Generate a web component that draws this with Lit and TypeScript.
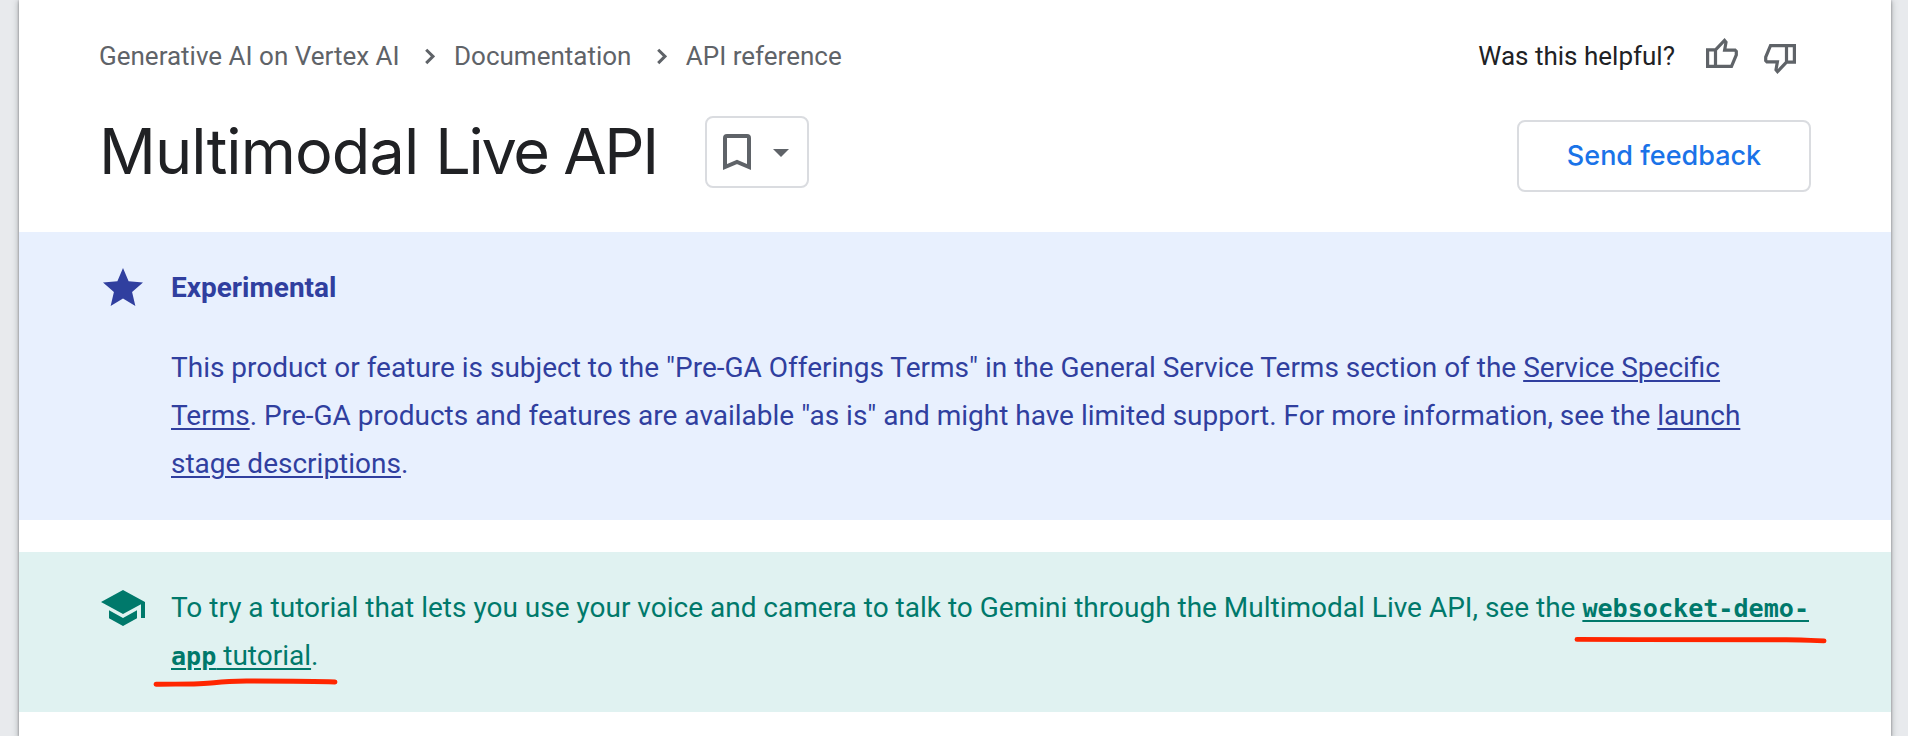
import { LitElement, html, css } from "lit";
import { customElement } from "lit/decorators.js";

const chevron = html`<svg class="chevron" width="10" height="17" viewBox="0 0 10 17"><path d="M1.2 1.7 8 8.4 1.2 15.1" fill="none" stroke="#5f6368" stroke-width="3"/></svg>`;
const thumb = "M1.6 11.8v16.5h23.9L30.3 17v-3.6l-1.2-1.2H18.6L20 4.2l-1.5-1.8L9.5 11.8ZM9.5 12v16M1.6 11.8h8";

@customElement("app-root")
export class AppRoot extends LitElement {
  static styles = css`
    :host { display: block; height: 736px; overflow: hidden; background: #e8eaed; font-family: Roboto, sans-serif; color: #202124; }
    * { box-sizing: border-box; }
    .page { position: relative; margin: 0 17px 0 19px; height: 736px; background: #fff; box-shadow: 0 2px 4px rgba(60,64,67,.3), 0 2px 6px 2px rgba(60,64,67,.15), 0 0 2px rgba(60,64,67,.4); }
    .top { display: flex; justify-content: space-between; height: 80px; padding: 32px 80px 0; font-size: 26px; line-height: 48px; }
    .crumbs { display: flex; align-items: center; color: #5f6368; height: 48px; white-space: nowrap; }
    .chevron { margin: 0 19px 0 25.4px; }
    .helpful { display: flex; align-items: center; height: 48px; white-space: nowrap; padding-right: 15px; }
    .up { margin-left: 31px; margin-top: -6px; }
    .down { margin-left: 26px; margin-top: 6px; }
    .title { display: flex; align-items: flex-start; height: 152px; padding: 0 80px; }
    h1 { margin: 31px 0 0; font: 400 63px/80px Inter, sans-serif; white-space: nowrap; width: 557px; letter-spacing: -.9px; }
    .tight { letter-spacing: -2.3px; }
    .save { display: flex; align-items: center; margin: 36px 0 0 49px; width: 104px; height: 72px; border: 2px solid #dadce0; border-radius: 8px; padding-left: 16px; }
    .caret { margin-left: 22px; margin-top: 1px; }
    .send { margin: 40px 0 0 auto; width: 294px; height: 72px; border: 2px solid #dadce0; border-radius: 8px; background: #fff; color: #1a73e8; font: 500 27px/68px Inter, sans-serif; padding: 0; text-align: center; }
    .notice { display: flex; padding: 32px 80px; font-size: 28px; line-height: 48px; white-space: nowrap; }
    .experimental { background: #e8f0fe; color: #303f9f; height: 288px; }
    .tutorial { background: #e0f2f1; color: #00796b; height: 160px; margin-top: 32px; }
    .icon { flex: none; width: 48px; height: 48px; margin-right: 24px; fill: currentColor; }
    p { margin: 0; }
    .body { margin-top: 32px; }
    strong { display: block; font-weight: 700; }
    a { color: inherit; text-decoration: underline; text-decoration-thickness: 2px; text-underline-offset: 3px; }
    code { font: 700 25.1px/1 "DejaVu Sans Mono", monospace; }
    .marks { position: absolute; left: 0; top: 0; width: 1872px; height: 736px; pointer-events: none; }
  `;

  render() {
    return html`<main class="page">
      <div class="top">
        <nav class="crumbs"><span>Generative AI on Vertex AI</span>${chevron}<span>Documentation</span>${chevron}<span>API reference</span></nav>
        <div class="helpful"><span>Was this helpful?</span>
          <svg class="up" width="32" height="30" viewBox="0 0 32 30"><path d=${thumb} fill="none" stroke="#5f6368" stroke-width="3.2"/></svg>
          <svg class="down" width="32" height="30" viewBox="0 0 32 30"><path transform="rotate(180 16 15)" d=${thumb} fill="none" stroke="#5f6368" stroke-width="3.2"/></svg>
        </div>
      </div>
      <div class="title">
        <h1>Multimodal <span class="tight">Live API</span></h1>
        <div class="save">
          <svg width="28" height="36" viewBox="0 0 28 36"><path d="M2 33V4a2 2 0 0 1 2-2H24a2 2 0 0 1 2 2V33L14 28Z" fill="none" stroke="#5f6368" stroke-width="4"/></svg>
          <svg class="caret" width="16" height="8" viewBox="0 0 16 8"><path d="M0 0h16L8 8Z" fill="#5f6368"/></svg>
        </div>
        <button class="send">Send feedback</button>
      </div>
      <section class="notice experimental">
        <svg class="icon" viewBox="0 0 24 24"><path d="M12 17.27 18.18 21l-1.64-7.03L22 9.24l-7.19-.61L12 2 9.19 8.63 2 9.24l5.46 4.73L5.82 21z"/></svg>
        <div><strong>Experimental</strong>
          <p class="body">This product or feature is subject to the "Pre-GA Offerings Terms" in the General Service Terms section of the <a>Service Specific<br>Terms</a>. Pre-GA products and features are available "as is" and might have limited support. For more information, see the <a>launch<br>stage descriptions</a>.</p></div>
      </section>
      <section class="notice tutorial">
        <svg class="icon" viewBox="0 0 24 24"><path d="M5 13.18v4L12 21l7-3.82v-4L12 17l-7-3.82zM12 3 1 9l11 6 9-4.91V17h2V9L12 3z"/></svg>
        <p>To try a tutorial that lets you use your voice and camera to talk to Gemini through the Multimodal Live API, see the <a><code>websocket-demo-<br>app</code> tutorial</a>.</p>
      </section>
      <svg class="marks" viewBox="19 0 1872 736"><g fill="none" stroke="#ff2600" stroke-width="4.9" stroke-linecap="round"><path d="M1577 639.4C1650 639.8 1745 640 1780 639.8S1805 640.6 1824 640.9"/><path d="M156 684.3C175 683.8 198 684.6 214 682.7S238 681 250 681 315 681.1 335 682"/></g></svg>
    </main>`;
  }
}
